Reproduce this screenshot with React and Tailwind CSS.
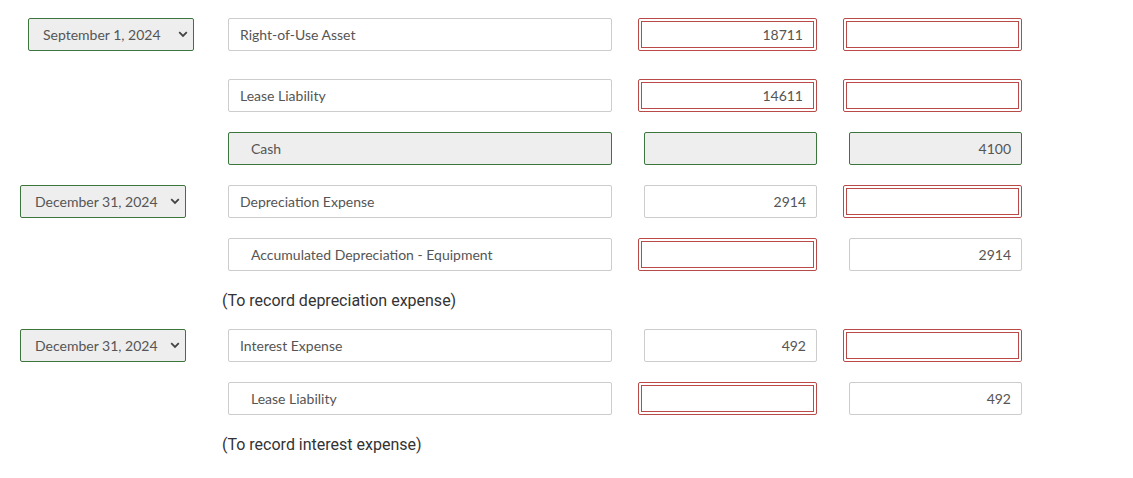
import React from 'react';

const font = { fontFamily: 'Lato, "Open Sans", Arial, sans-serif' };
const noteFont = { fontFamily: 'Roboto, "Open Sans", Arial, sans-serif' };

function DateSelect({ label, offset }) {
  return (
    <div className={`${offset} w-[166px] h-full flex items-center justify-between border border-[#3c763d] bg-[#eeeeee] rounded-[2px] pl-[14px] pr-[5px] text-[14px] text-[#555555]`}>
      <span>{label}</span>
      <svg width="10" height="7" viewBox="0 0 10 7" className="text-[#444444]">
        <path d="M1.2 1.2 L5 5 L8.8 1.2" fill="none" stroke="currentColor" strokeWidth="1.8" />
      </svg>
    </div>
  );
}

function Account({ label, indent, done }) {
  return (
    <div
      className={`w-[384px] h-full flex items-center rounded-[2px] text-[14px] text-[#555555] border ${
        done ? 'border-[#3c763d] bg-[#eeeeee]' : 'border-[#cccccc] bg-white'
      } ${indent ? 'pl-[22px]' : 'pl-[11px]'}`}
    >
      {label}
    </div>
  );
}

function Amount({ value, state }) {
  if (state === 'wrong') {
    return (
      <div className="w-[179px] h-full border border-[#b94a48] rounded-[2px] p-[2px] bg-white">
        <div className="w-full h-full border border-[#b94a48] flex items-center justify-end pr-[10px] text-[14px] text-[#555555]">
          {value}
        </div>
      </div>
    );
  }
  return (
    <div
      className={`w-[173px] h-full flex items-center justify-end pr-[10px] rounded-[2px] text-[14px] text-[#555555] border ${
        state === 'done' ? 'border-[#3c763d] bg-[#eeeeee]' : 'border-[#cccccc] bg-white'
      }`}
    >
      {value}
    </div>
  );
}

function Row({ date, dateOffset, account, indent, done, debit, debitState, credit, creditState, top }) {
  return (
    <div className={`flex h-[33px] ${top}`}>
      <div className="w-[228px] h-full flex">
        {date && <DateSelect label={date} offset={dateOffset} />}
      </div>
      <Account label={account} indent={indent} done={done} />
      <div className="w-[205px] h-full flex justify-end">
        <Amount value={debit} state={debitState} />
      </div>
      <div className="w-[205px] h-full flex justify-end">
        <Amount value={credit} state={creditState} />
      </div>
    </div>
  );
}

function Note({ text, top }) {
  return (
    <div className={`pl-[222px] ${top} h-[20px] leading-[20px] text-[16px] text-[#333333]`} style={noteFont}>
      {text}
    </div>
  );
}

export default function App() {
  return (
    <div className="w-[1133px] h-[478px] bg-white pt-[18px]" style={font}>
      <Row date="September 1, 2024" dateOffset="ml-[28px]" account="Right-of-Use Asset" debit="18711" debitState="wrong" credit="" creditState="wrong" top="" />
      <Row account="Lease Liability" debit="14611" debitState="wrong" credit="" creditState="wrong" top="mt-[28px]" />
      <Row account="Cash" indent done debit="" debitState="done" credit="4100" creditState="done" top="mt-[20px]" />
      <Row date="December 31, 2024" dateOffset="ml-[20px]" account="Depreciation Expense" debit="2914" debitState="normal" credit="" creditState="wrong" top="mt-[20px]" />
      <Row account="Accumulated Depreciation - Equipment" indent debit="" debitState="wrong" credit="2914" creditState="normal" top="mt-[20px]" />
      <Note text="(To record depreciation expense)" top="mt-[20px]" />
      <Row date="December 31, 2024" dateOffset="ml-[20px]" account="Interest Expense" debit="492" debitState="normal" credit="" creditState="wrong" top="mt-[18px]" />
      <Row account="Lease Liability" indent debit="" debitState="wrong" credit="492" creditState="normal" top="mt-[20px]" />
      <Note text="(To record interest expense)" top="mt-[20px]" />
    </div>
  );
}
